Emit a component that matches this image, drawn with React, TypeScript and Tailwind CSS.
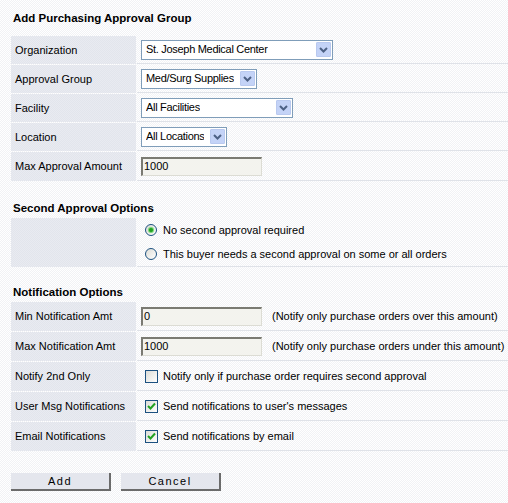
import React from "react";

const dither =
  "bg-[repeating-conic-gradient(#f1f2f5_0_25%,#ffffff_0_50%)] bg-[length:2px_2px]";
const labelBg =
  "bg-[repeating-conic-gradient(#e2e5ec_0_25%,#e9ebf1_0_50%)] bg-[length:2px_2px]";

function Chevron() {
  return (
    <span className="flex h-[15px] w-[15px] shrink-0 items-center justify-center rounded-[1px] border border-[#b9c9ef] bg-[#c4d3f7]">
      <svg width="9" height="6" viewBox="0 0 9 6">
        <path d="M1 1 L4.5 4.5 L8 1" fill="none" stroke="#4d6185" strokeWidth="2" />
      </svg>
    </span>
  );
}

function Select({ value, width }: { value: string; width: string }) {
  return (
    <div
      className={`flex h-[20px] items-center justify-between border border-[#7f9db9] bg-white pl-[4px] pr-[1px] ${width}`}
    >
      <span className="overflow-hidden whitespace-nowrap tracking-[-0.3px]">{value}</span>
      <Chevron />
    </div>
  );
}

function TextInput({ value }: { value: string }) {
  return (
    <div className="flex h-[19px] w-[121px] items-center border-t-2 border-l-2 border-t-[#7a7a72] border-l-[#7a7a72] border-r border-b border-r-[#dcdcd4] border-b-[#dcdcd4] bg-[#f3f3ee] pl-[1px]">
      {value}
    </div>
  );
}

function Radio({ checked }: { checked?: boolean }) {
  return (
    <span className="flex h-[12px] w-[12px] items-center justify-center rounded-full border border-[#1c5180] bg-[linear-gradient(135deg,#dcdcd6,#ffffff)]">
      {checked && <span className="h-[4px] w-[4px] rounded-full bg-[#21a121] shadow-[0_0_1px_1px_#6ad26a]" />}
    </span>
  );
}

function Checkbox({ checked }: { checked?: boolean }) {
  return (
    <span className="flex h-[13px] w-[13px] items-center justify-center border border-[#1c5180] bg-[linear-gradient(135deg,#dcdcd6,#ffffff)]">
      {checked && (
        <svg width="9" height="9" viewBox="0 0 9 9">
          <path d="M1 4 L3.5 6.5 L8 1.5" fill="none" stroke="#21a121" strokeWidth="2" />
        </svg>
      )}
    </span>
  );
}

function Row({
  label,
  children,
  h = "h-[28px]",
}: {
  label: string;
  children?: React.ReactNode;
  h?: string;
}) {
  return (
    <div className={`mb-[1px] flex ${h}`}>
      <div className={`flex w-[125px] shrink-0 items-center pl-[4px] ${labelBg}`}>{label}</div>
      <div className="ml-[1px] flex flex-1 items-center gap-[10px] border-b border-[#dfe2e8] pl-[4px]">
        {children}
      </div>
    </div>
  );
}

export default function App() {
  return (
    <div
      className={`h-[503px] w-[508px] overflow-hidden pl-[11px] pt-[12px] text-[11px] text-black ${dither}`}
      style={{ fontFamily: '"Liberation Sans", Arial, sans-serif' }}
    >
      <h1 className="pl-[2px] text-[11.5px] font-bold leading-[13px]">Add Purchasing Approval Group</h1>

      <div className="mt-[11px]">
        <Row label="Organization">
          <Select value="St. Joseph Medical Center" width="w-[192px]" />
        </Row>
        <Row label="Approval Group">
          <Select value="Med/Surg Supplies" width="w-[116px]" />
        </Row>
        <Row label="Facility">
          <Select value="All Facilities" width="w-[152px]" />
        </Row>
        <Row label="Location">
          <Select value="All Locations" width="w-[86px]" />
        </Row>
        <Row label="Max Approval Amount" h="h-[29px]">
          <TextInput value="1000" />
        </Row>
      </div>

      <h2 className="mt-[21px] pl-[2px] text-[11.5px] font-bold leading-[13px]">Second Approval Options</h2>

      <div className="mt-[3px] flex h-[49px]">
        <div className={`w-[125px] shrink-0 ${labelBg}`} />
        <div className="ml-[1px] flex flex-1 flex-col justify-center gap-[8px] border-b border-[#dfe2e8] pl-[8px]">
          <label className="flex items-center gap-[6px]">
            <Radio checked />
            No second approval required
          </label>
          <label className="flex items-center gap-[6px]">
            <Radio />
            This buyer needs a second approval on some or all orders
          </label>
        </div>
      </div>

      <h2 className="mt-[19px] pl-[2px] text-[11.5px] font-bold leading-[13px]">Notification Options</h2>

      <div className="mt-[3px]">
        <Row label="Min Notification Amt" h="h-[29px]">
          <TextInput value="0" />
          <span>(Notify only purchase orders over this amount)</span>
        </Row>
        <Row label="Max Notification Amt" h="h-[29px]">
          <TextInput value="1000" />
          <span>(Notify only purchase orders under this amount)</span>
        </Row>
        <Row label="Notify 2nd Only" h="h-[29px]">
          <label className="flex items-center gap-[5px] pl-[4px]">
            <Checkbox />
            Notify only if purchase order requires second approval
          </label>
        </Row>
        <Row label="User Msg Notifications" h="h-[29px]">
          <label className="flex items-center gap-[5px] pl-[4px]">
            <Checkbox checked />
            Send notifications to user's messages
          </label>
        </Row>
        <Row label="Email Notifications" h="h-[29px]">
          <label className="flex items-center gap-[5px] pl-[4px]">
            <Checkbox checked />
            Send notifications by email
          </label>
        </Row>
      </div>

      <div className="mt-[22px] flex gap-[10px]">
        <button className="h-[18px] w-[100px] border-b-2 border-r-2 border-b-[#6b6b6b] border-r-[#6b6b6b] bg-[#e4e6ed] text-[11px] leading-none tracking-[1.5px]">
          Add
        </button>
        <button className="h-[18px] w-[100px] border-b-2 border-r-2 border-b-[#6b6b6b] border-r-[#6b6b6b] bg-[#e4e6ed] text-[11px] leading-none tracking-[1.5px]">
          Cancel
        </button>
      </div>
    </div>
  );
}
